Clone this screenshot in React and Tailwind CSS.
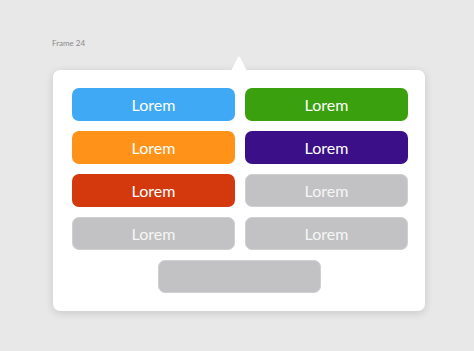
export default function App() {
  const items = [
    { bg: "bg-[#3fa9f5]", label: "Lorem" },
    { bg: "bg-[#3aa00e]", label: "Lorem" },
    { bg: "bg-[#ff931a]", label: "Lorem" },
    { bg: "bg-[#3a0f87]", label: "Lorem" },
    { bg: "bg-[#d4380d]", label: "Lorem" },
    { bg: "bg-[#c2c2c4]", label: "Lorem", gray: true },
    { bg: "bg-[#c2c2c4]", label: "Lorem", gray: true },
    { bg: "bg-[#c2c2c4]", label: "Lorem", gray: true },
  ];
  return (
    <div className="w-[474px] h-[351px] bg-[#e8e8e8] pt-[38px] overflow-hidden" style={{ fontFamily: "Lato, 'Open Sans', sans-serif" }}>
      <div className="pl-[52px] text-[8px] leading-[10px] text-[#8a8a8a]">Frame 24</div>
      <div className="relative mt-[22px] ml-[53px] w-[372px]">
        <svg className="absolute left-[178px] top-[-14px]" width="16" height="15" viewBox="0 0 16 15">
          <path d="M0 15 L6.8 1.6 Q8 -0.4 9.2 1.6 L16 15 Z" fill="#ffffff" />
        </svg>
        <div className="bg-white rounded-[7px] shadow-[0_2px_8px_rgba(0,0,0,0.14)] pt-[18px] pb-[18px] pl-[19px] pr-[17px]">
          <div className="grid grid-cols-[163px_163px] gap-x-[10px] gap-y-[10px]">
            {items.map((it, i) => (
              <div
                key={i}
                className={`${it.bg} h-[33px] rounded-[7px] flex items-center justify-center text-[16px] ${it.gray ? "text-[#f6f6f6] border border-[#d0d0d2]" : "text-white"}`}
              >
                {it.label}
              </div>
            ))}
          </div>
          <div className="flex justify-center mt-[10px] pr-[2px]">
            <div className="w-[163px] h-[33px] rounded-[7px] bg-[#c2c2c4] border border-[#d0d0d2]" />
          </div>
        </div>
      </div>
    </div>
  );
}
